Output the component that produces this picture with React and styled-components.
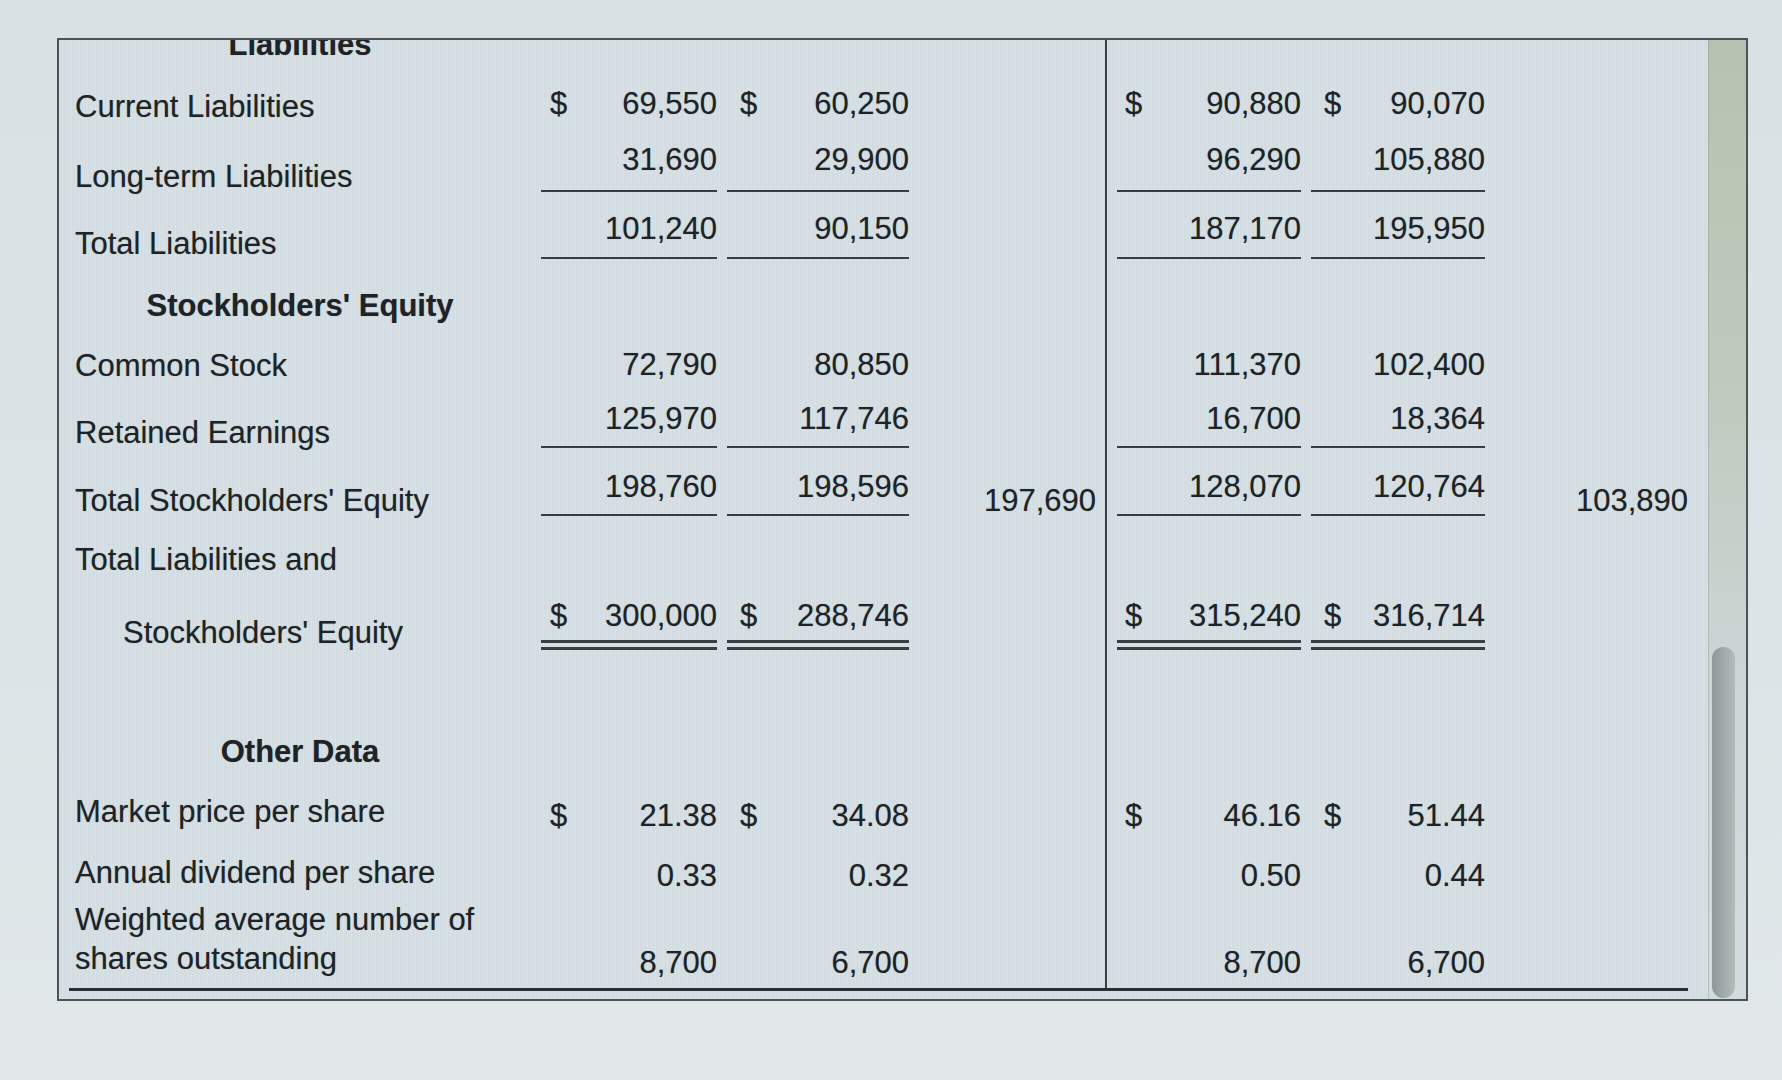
import React from 'react';
import styled, { createGlobalStyle, css } from 'styled-components';

const GlobalStyle = createGlobalStyle`
  html, body {
    margin: 0;
    padding: 0;
  }

  body {
    background: linear-gradient(180deg, #d9e1e5 0%, #dce4e7 60%, #e2e8ea 100%);
    font-family: "Liberation Sans", Arial, sans-serif;
    color: #1d2326;
  }
`;

const Page = styled.div`
  box-sizing: border-box;
  min-height: 1080px;
  padding: 38px 0 0 57px;
`;

const Panel = styled.div`
  box-sizing: border-box;
  display: flex;
  width: 1691px;
  height: 963px;
  border: 2px solid #4a5457;
  background-color: #d4dee2;
  background-image: repeating-linear-gradient(
    90deg,
    rgba(255, 255, 255, 0.1) 0 1px,
    transparent 1px 4px
  );
`;

const Viewport = styled.div`
  flex: 1;
  overflow: hidden;
`;

const Sheet = styled.div`
  margin-top: -20px;
  padding-left: 10px;
`;

const Row = styled.div`
  display: grid;
  grid-template-columns: 462px 176px 182px 188px 184px 174px 193px;
  column-gap: 10px;
  width: 1619px;
  height: ${(p) => p.$h}px;
  ${(p) =>
    p.$last &&
    css`
      border-bottom: 3px solid #283033;
    `}
`;

const Label = styled.div`
  padding-top: ${(p) => p.$top}px;
  padding-left: ${(p) => (p.$indent ? 54 : 6)}px;
  font-size: 31px;
  line-height: ${(p) => (p.$tall ? 39 : 30)}px;
  white-space: nowrap;
  text-shadow: 0 0 1px rgba(20, 26, 28, 0.35);

  ${(p) =>
    p.$head &&
    css`
      padding-left: 0;
      text-align: center;
      font-weight: 700;
    `}
`;

const ruleLine = 'linear-gradient(#353e41, #353e41)';

const Amount = styled.div`
  display: flex;
  justify-content: space-between;
  padding-top: ${(p) => p.$top}px;
  padding-right: ${(p) => p.$pr || 0}px;
  font-size: 31px;
  line-height: 30px;
  white-space: nowrap;
  text-shadow: 0 0 1px rgba(20, 26, 28, 0.35);
  background-repeat: no-repeat;

  ${(p) =>
    p.$rule === 'single' &&
    css`
      background-image: ${ruleLine};
      background-size: 100% 2px;
      background-position: left bottom;
    `}

  ${(p) =>
    p.$rule === 'double' &&
    css`
      background-image: ${ruleLine}, ${ruleLine};
      background-size: 100% 3px, 100% 3px;
      background-position: left bottom, left bottom 7px;
    `}

  ${(p) =>
    p.$divider &&
    css`
      border-right: 2px solid #363f42;
    `}
`;

const Dollar = styled.span`
  margin-left: ${(p) => p.$ml}px;
`;

const Track = styled.div`
  box-sizing: border-box;
  width: 38px;
  display: flex;
  flex-direction: column;
  justify-content: flex-end;
  align-items: center;
  padding: 0 8px 1px 0;
  border-left: 1px solid rgba(120, 135, 130, 0.35);
  background: linear-gradient(180deg, #b6c2b1 0%, #bfcabd 35%, #cdd7d8 70%, #d2dcdf 100%);
`;

const Thumb = styled.div`
  width: 23px;
  height: 351px;
  border-radius: 12px;
  background: linear-gradient(90deg, #8e9997 0%, #a3adab 60%, #b3bcba 100%);
`;

const ROWS = [
  { h: 55, label: 'Liabilities', head: true, lt: 10 },
  {
    h: 65, label: 'Current Liabilities', lt: 17, nt: 14,
    a: ['$', '69,550'], b: ['$', '60,250'], d: ['$', '90,880'], e: ['$', '90,070'],
  },
  {
    h: 49, label: 'Long-term Liabilities', lt: 22, nt: 5, rule: 'single',
    a: '31,690', b: '29,900', d: '96,290', e: '105,880',
  },
  {
    h: 68, label: 'Total Liabilities', lt: 40, nt: 25, rule: 'single',
    a: '101,240', b: '90,150', d: '187,170', e: '195,950',
  },
  { h: 78, label: "Stockholders' Equity", head: true, lt: 34 },
  {
    h: 57, label: 'Common Stock', lt: 16, nt: 15,
    a: '72,790', b: '80,850', d: '111,370', e: '102,400',
  },
  {
    h: 54, label: 'Retained Earnings', lt: 26, nt: 12, rule: 'single',
    a: '125,970', b: '117,746', d: '16,700', e: '18,364',
  },
  {
    h: 68, label: "Total Stockholders' Equity", lt: 40, nt: 26, st: 40, rule: 'single',
    a: '198,760', b: '198,596', c: '197,690', d: '128,070', e: '120,764', f: '103,890',
  },
  { h: 71, label: 'Total Liabilities and', lt: 31 },
  {
    h: 65, label: "Stockholders' Equity", indent: true, lt: 33, nt: 16, rule: 'double',
    a: ['$', '300,000'], b: ['$', '288,746'], d: ['$', '315,240'], e: ['$', '316,714'],
  },
  { h: 70 },
  { h: 60, label: 'Other Data', head: true, lt: 17 },
  {
    h: 65, label: 'Market price per share', lt: 17, nt: 21,
    a: ['$', '21.38'], b: ['$', '34.08'], d: ['$', '46.16'], e: ['$', '51.44'],
  },
  {
    h: 55, label: 'Annual dividend per share', lt: 13, nt: 16,
    a: '0.33', b: '0.32', d: '0.50', e: '0.44',
  },
  {
    h: 88, label: ['Weighted average number of', 'shares outstanding'], tall: true, lt: 0, nt: 48, last: true,
    a: '8,700', b: '6,700', d: '8,700', e: '6,700',
  },
];

// left offset of the "$" in each money column
const DOLLAR_OFFSET = { a: 9, b: 13, d: 8, e: 13 };

const Cell = ({ value, col, top, rule }) => {
  const hasDollar = Array.isArray(value);
  return (
    <Amount $top={top} $rule={value ? rule : undefined}>
      {hasDollar ? <Dollar $ml={DOLLAR_OFFSET[col]}>{value[0]}</Dollar> : <span />}
      <span>{hasDollar ? value[1] : value}</span>
    </Amount>
  );
};

const SheetRow = ({ row }) => {
  const label = Array.isArray(row.label)
    ? row.label.map((line) => <div key={line}>{line}</div>)
    : row.label;

  return (
    <Row $h={row.h} $last={row.last}>
      <Label $top={row.lt || 0} $head={row.head} $indent={row.indent} $tall={row.tall}>
        {label}
      </Label>
      <Cell value={row.a} col="a" top={row.nt} rule={row.rule} />
      <Cell value={row.b} col="b" top={row.nt} rule={row.rule} />
      <Amount $top={row.st || 0} $pr={9} $divider>
        <span />
        <span>{row.c}</span>
      </Amount>
      <Cell value={row.d} col="d" top={row.nt} rule={row.rule} />
      <Cell value={row.e} col="e" top={row.nt} rule={row.rule} />
      <Amount $top={row.st || 0}>
        <span />
        <span>{row.f}</span>
      </Amount>
    </Row>
  );
};

const App = () => (
  <>
    <GlobalStyle />
    <Page>
      <Panel>
        <Viewport>
          <Sheet>
            {ROWS.map((row, i) => (
              <SheetRow key={i} row={row} />
            ))}
          </Sheet>
        </Viewport>
        <Track>
          <Thumb />
        </Track>
      </Panel>
    </Page>
  </>
);

export default App;
